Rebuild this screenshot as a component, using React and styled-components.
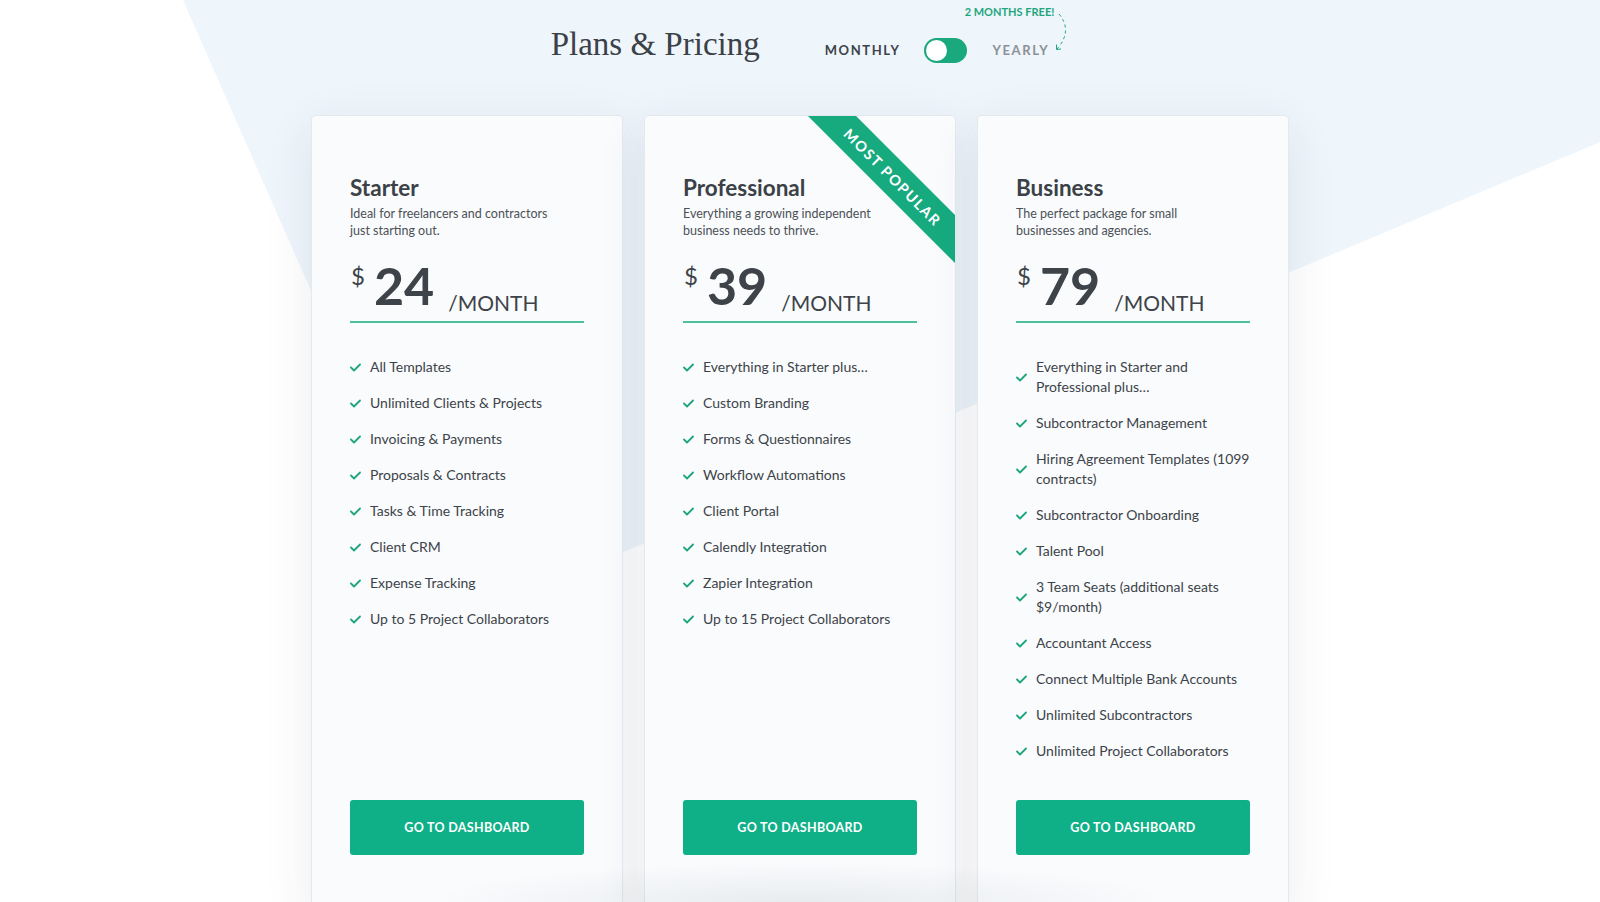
import React from "react";
import styled, { createGlobalStyle } from "styled-components";

const plans = [
  {
    name: "Starter",
    desc: "Ideal for freelancers and contractors just starting out.",
    price: 24,
    features: [
      "All Templates",
      "Unlimited Clients & Projects",
      "Invoicing & Payments",
      "Proposals & Contracts",
      "Tasks & Time Tracking",
      "Client CRM",
      "Expense Tracking",
      "Up to 5 Project Collaborators",
    ],
  },
  {
    name: "Professional",
    desc: "Everything a growing independent business needs to thrive.",
    price: 39,
    popular: true,
    features: [
      "Everything in Starter plus…",
      "Custom Branding",
      "Forms & Questionnaires",
      "Workflow Automations",
      "Client Portal",
      "Calendly Integration",
      "Zapier Integration",
      "Up to 15 Project Collaborators",
    ],
  },
  {
    name: "Business",
    desc: "The perfect package for small businesses and agencies.",
    price: 79,
    features: [
      "Everything in Starter and Professional plus…",
      "Subcontractor Management",
      "Hiring Agreement Templates (1099 contracts)",
      "Subcontractor Onboarding",
      "Talent Pool",
      "3 Team Seats (additional seats $9/month)",
      "Accountant Access",
      "Connect Multiple Bank Accounts",
      "Unlimited Subcontractors",
      "Unlimited Project Collaborators",
    ],
  },
];

const Check = () => (
  <svg width="11" height="9" viewBox="0 0 11 9">
    <polyline
      points="1,4.5 4,7.5 10,1.5"
      fill="none"
      stroke="#1fa57d"
      strokeWidth="1.8"
      strokeLinecap="round"
      strokeLinejoin="round"
    />
  </svg>
);

const App = () => {
  return (
    <Page>
      <GlobalStyle />
      <Header>
        <Title>Plans &amp; Pricing</Title>
        <Billing>
          <Period active>MONTHLY</Period>
          <Switch>
            <Knob />
          </Switch>
          <YearlyWrap>
            <Period>YEARLY</Period>
            <FreeNote>2 MONTHS FREE!</FreeNote>
            <NoteArrow width="22" height="44" viewBox="0 0 22 44">
              <path
                d="M7 3 Q 21 20 5 38"
                fill="none"
                stroke="#1fa57d"
                strokeWidth="1"
                strokeDasharray="3 3"
              />
              <path
                d="M4.5 33.5 L4.5 38.5 L9 38"
                fill="none"
                stroke="#1fa57d"
                strokeWidth="1"
              />
            </NoteArrow>
          </YearlyWrap>
        </Billing>
      </Header>

      <Cards>
        {plans.map((plan) => (
          <Card key={plan.name}>
            {plan.popular && <Ribbon>MOST POPULAR</Ribbon>}
            <PlanName>{plan.name}</PlanName>
            <PlanDesc>{plan.desc}</PlanDesc>
            <PriceRow>
              <Currency>$</Currency>
              <Amount>{plan.price}</Amount>
              <Per>/MONTH</Per>
            </PriceRow>
            <Features>
              {plan.features.map((f) => (
                <Feature key={f}>
                  <Check />
                  <span>{f}</span>
                </Feature>
              ))}
            </Features>
            <DashButton>GO TO DASHBOARD</DashButton>
          </Card>
        ))}
      </Cards>
      <BottomFade />
    </Page>
  );
};

export default App;

const GlobalStyle = createGlobalStyle`
  body {
    margin: 0;
    background: #ffffff;
    font-family: Lato, "Open Sans", sans-serif;
    color: #3d4349;
    overflow: hidden;
  }
  * { box-sizing: border-box; }
`;

const Page = styled.div`
  position: relative;
  height: 902px;
  overflow: hidden;

  &::before {
    content: "";
    position: absolute;
    inset: 0;
    background: #eef5fb;
    clip-path: polygon(183px 0, 1600px 0, 1600px 142px, 457px 622px);
  }
`;

const Header = styled.header`
  position: relative;
  height: 115px;
  padding: 28px 0 0 0;
  display: flex;
  justify-content: center;
  align-items: baseline;
  gap: 65px;
`;

const Title = styled.h1`
  margin: 0;
  font-family: "Liberation Serif", serif;
  font-weight: 400;
  font-size: 33px;
  line-height: 1;
  color: #3b4147;
`;

const Billing = styled.div`
  display: flex;
  align-items: center;
`;

const Period = styled.span`
  font-size: 13px;
  line-height: 16px;
  font-weight: 700;
  letter-spacing: 1.6px;
  color: ${(p) => (p.active ? "#3d4349" : "#8b9197")};
`;

const Switch = styled.div`
  width: 43px;
  height: 25px;
  margin: 0 25px 0 24px;
  border-radius: 13px;
  background: #19a97c;
  padding: 2px;
  display: flex;
  align-items: center;
`;

const Knob = styled.div`
  width: 21px;
  height: 21px;
  border-radius: 50%;
  background: #ffffff;
`;

const YearlyWrap = styled.div`
  position: relative;
  display: flex;
  align-items: center;
`;

const FreeNote = styled.span`
  position: absolute;
  right: -5px;
  top: -37px;
  white-space: nowrap;
  font-size: 11px;
  font-weight: 700;
  color: #1fa57d;
`;

const NoteArrow = styled.svg`
  position: absolute;
  left: 60px;
  top: -31px;
`;

const Cards = styled.main`
  position: relative;
  display: grid;
  grid-template-columns: repeat(3, 312px);
  gap: 21px;
  justify-content: center;
  align-items: stretch;
`;

const Card = styled.section`
  position: relative;
  overflow: hidden;
  display: flex;
  flex-direction: column;
  padding: 59px 38px 62px;
  background: #f9fbfd;
  border: 1px solid #e4e9ee;
  border-radius: 4px;
  box-shadow: 0 12px 50px rgba(40, 60, 90, 0.09);
`;

const Ribbon = styled.div`
  position: absolute;
  top: 44px;
  right: -58px;
  width: 240px;
  height: 34px;
  transform: rotate(45deg);
  background: #17aa7f;
  color: #ffffff;
  font-size: 14.5px;
  font-weight: 700;
  letter-spacing: 1.5px;
  display: flex;
  align-items: center;
  justify-content: center;
`;

const PlanName = styled.h2`
  margin: 0;
  font-size: 22.5px;
  line-height: 25px;
  font-weight: 700;
  color: #3b4147;
`;

const PlanDesc = styled.p`
  margin: 5px 0 0;
  max-width: 200px;
  font-size: 12.5px;
  line-height: 17px;
  color: #4c5157;
`;

const PriceRow = styled.div`
  margin-top: 20px;
  padding-bottom: 10px;
  border-bottom: 2px solid #4cbf9b;
  display: flex;
  align-items: flex-end;
  color: #3d4349;
`;

const Currency = styled.span`
  align-self: flex-start;
  margin: 5px 9px 0 1px;
  font-size: 24px;
  line-height: 1;
`;

const Amount = styled.span`
  font-size: 52px;
  line-height: 1;
  font-weight: 700;
  margin-right: 14px;
`;

const Per = styled.span`
  font-size: 21px;
  line-height: 16px;
`;

const Features = styled.ul`
  list-style: none;
  margin: 34px 0 39px;
  padding: 0;
  display: flex;
  flex-direction: column;
  gap: 16px;
`;

const Feature = styled.li`
  display: flex;
  align-items: center;
  gap: 9px;
  font-size: 14px;
  line-height: 20px;
  color: #3d4349;

  svg {
    flex: none;
  }
`;

const DashButton = styled.button`
  margin-top: auto;
  height: 55px;
  border: none;
  border-radius: 3px;
  background: #0fb088;
  color: #ffffff;
  font-family: Lato, sans-serif;
  font-size: 12.5px;
  font-weight: 700;
  letter-spacing: 0.3px;
  cursor: pointer;
`;

const BottomFade = styled.div`
  position: absolute;
  left: 50%;
  bottom: 0;
  width: 760px;
  height: 40px;
  transform: translateX(-50%);
  background: radial-gradient(ellipse at 50% 100%, rgba(40, 50, 70, 0.08), transparent 70%);
  pointer-events: none;
`;
